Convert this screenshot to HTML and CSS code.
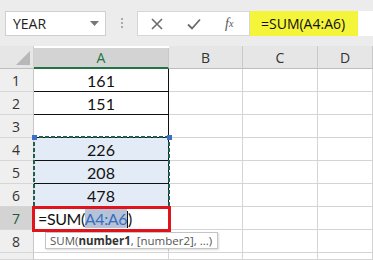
FILE: index.html
```html
<!DOCTYPE html>
<html lang="en">
<head>
  <meta charset="UTF-8" />
  <title>Excel - SUM</title>
  <link rel="stylesheet" href="styles.css">
</head>
<body>
  <div class="toolbar">
    <div class="name-box">
      <span>YEAR</span>
      <svg class="caret" width="9" height="5" viewBox="0 0 9 5"><path d="M0 0 H9 L4.5 5 Z" fill="#777"/></svg>
    </div>
    <div class="grip">
      <span></span><span></span><span></span>
    </div>
    <div class="fx-buttons">
      <svg width="12" height="12" viewBox="0 0 12 12"><path d="M1 1 L11 11 M11 1 L1 11" stroke="#6b6b6b" stroke-width="1.6"/></svg>
      <svg width="14" height="12" viewBox="0 0 14 12"><path d="M1 6.5 L5 10.5 L13 1.5" stroke="#6b6b6b" stroke-width="1.8" fill="none"/></svg>
      <span class="fx">f<sub>x</sub></span>
    </div>
    <div class="formula-bar">
      <span class="formula-text">=SUM(A4:A6)</span>
    </div>
  </div>

  <div class="sheet">
    <div class="corner"><svg width="20" height="20" viewBox="0 0 20 20"><path d="M20 0 V20 H0 Z" fill="#b8b8b8"/></svg></div>
    <div class="col-head active">A</div>
    <div class="col-head">B</div>
    <div class="col-head">C</div>
    <div class="col-head">D</div>

    <div class="row-head">1</div>
    <div class="cell val bordered">161</div>
    <div class="cell"></div><div class="cell"></div><div class="cell"></div>

    <div class="row-head">2</div>
    <div class="cell val bordered">151</div>
    <div class="cell"></div><div class="cell"></div><div class="cell"></div>

    <div class="row-head">3</div>
    <div class="cell val bordered"></div>
    <div class="cell"></div><div class="cell"></div><div class="cell"></div>

    <div class="row-head">4</div>
    <div class="cell val ref">226
      <div class="ref-range"></div>
      <span class="handle left"></span><span class="handle right"></span>
    </div>
    <div class="cell"></div><div class="cell"></div><div class="cell"></div>

    <div class="row-head">5</div>
    <div class="cell val ref">208</div>
    <div class="cell"></div><div class="cell"></div><div class="cell"></div>

    <div class="row-head">6</div>
    <div class="cell val ref">478</div>
    <div class="cell"></div><div class="cell"></div><div class="cell"></div>

    <div class="row-head active">7</div>
    <div class="cell edit">
      <div class="edit-box">=SUM(<span class="sel">A4:A6</span><span class="caret-line"></span>)</div>
      <div class="tooltip">SUM(<b>number1</b>, [number2], ...)</div>
    </div>
    <div class="cell"></div><div class="cell"></div><div class="cell"></div>

    <div class="row-head">8</div>
    <div class="cell"></div>
    <div class="cell"></div><div class="cell"></div><div class="cell"></div>

    <div class="row-head"></div>
    <div class="cell"></div>
    <div class="cell"></div><div class="cell"></div><div class="cell"></div>
  </div>
</body>
</html>
```

FILE: styles.css
```css
html, body {
  margin: 0;
  padding: 0;
}

body {
  width: 373px;
  height: 260px;
  overflow: hidden;
  background: #e9e9e9;
  font-family: 'Open Sans', 'Noto Sans', sans-serif;
  color: #222;
}

.toolbar {
  height: 46px;
  display: flex;
  align-items: center;
  padding-left: 5px;
  box-sizing: border-box;
  background: #ececec;
}

.name-box {
  width: 101px;
  height: 25px;
  box-sizing: border-box;
  background: white;
  border: 1px solid #cfcfcf;
  display: flex;
  align-items: center;
  justify-content: space-between;
  padding: 0 6px 0 7px;
  font-size: 14px;
  margin-top: 1px;
}

.grip {
  width: 31px;
  display: flex;
  flex-direction: column;
  align-items: center;
  gap: 2px;
}

.grip span {
  width: 2px;
  height: 2px;
  background: #aaa;
}

.fx-buttons {
  width: 113px;
  height: 25px;
  box-sizing: border-box;
  background: white;
  border: 1px solid #d6d6d6;
  display: flex;
  align-items: center;
  padding-left: 13px;
  gap: 24px;
  margin-top: 1px;
}

.fx {
  font-family: 'Liberation Serif', serif;
  font-style: italic;
  font-size: 14px;
  color: #555;
}

.fx sub {
  font-size: 10px;
  vertical-align: 1px;
}

.formula-bar {
  flex: 1;
  height: 25px;
  margin-top: 1px;
  background: white;
  display: flex;
}

.formula-text {
  background: #f4f43a;
  width: 108px;
  height: 100%;
  box-sizing: border-box;
  padding-left: 11px;
  display: flex;
  align-items: center;
  font-size: 14px;
  color: #111;
}

.sheet {
  display: grid;
  grid-template-columns: 34px 135px 74px 75px 1fr;
  grid-template-rows: repeat(9, 23px) 7px;
  background: white;
}

.corner {
  background: #e6e6e6;
  border-right: 1px solid #d0d0d0;
  border-bottom: 1px solid #bdbdbd;
  display: flex;
  align-items: flex-end;
  justify-content: flex-end;
  padding: 0 3px 3px 0;
  box-sizing: border-box;
}

.corner svg {
  width: 14px;
  height: 14px;
}

.col-head {
  background: #e6e6e6;
  border-right: 1px solid #c8c8c8;
  border-bottom: 1px solid #bdbdbd;
  display: flex;
  align-items: center;
  justify-content: center;
  font-size: 14px;
  color: #333;
}

.col-head.active {
  background: #d3d3d3;
  color: #217346;
  border-bottom: 2px solid #217346;
  margin-top: 2px;
}

.row-head {
  background: #efefef;
  border-right: 1px solid #c8c8c8;
  border-bottom: 1px solid #d6d6d6;
  font-size: 14px;
  display: flex;
  align-items: center;
  padding-left: 12px;
  color: #333;
  overflow: hidden;
}

.row-head.active {
  background: #d3d3d3;
  color: #1f5a3c;
}

.cell {
  border-right: 1px solid #d4d4d4;
  border-bottom: 1px solid #d4d4d4;
  position: relative;
}

.val {
  font-family: 'Lato', 'Open Sans', sans-serif;
  font-size: 16px;
  display: flex;
  align-items: center;
  justify-content: center;
  color: #111;
}

.bordered {
  border-right: 1px solid #111;
  border-bottom: 1px solid #111;
}

.ref {
  background: #e3ebf7;
  border-right: 1px solid #111;
  border-bottom: 1px solid #111;
}

.ref-range {
  position: absolute;
  left: -1px;
  top: -2px;
  width: 137px;
  height: 72px;
  background:
    repeating-linear-gradient(90deg, #1f5f52 0 4px, transparent 4px 6px) top / 100% 2px no-repeat,
    repeating-linear-gradient(90deg, #1f5f52 0 4px, transparent 4px 6px) bottom / 100% 2px no-repeat,
    repeating-linear-gradient(180deg, #1f5f52 0 4px, transparent 4px 6px) left / 2px 100% no-repeat,
    repeating-linear-gradient(180deg, #1f5f52 0 4px, transparent 4px 6px) right / 2px 100% no-repeat;
  z-index: 1;
}

.handle {
  position: absolute;
  top: -3px;
  width: 5px;
  height: 5px;
  background: #3c6fc8;
  z-index: 2;
}

.handle.left { left: -2px; }
.handle.right { right: -4px; }

.edit-box {
  position: absolute;
  left: -2px;
  top: -1px;
  width: 139px;
  height: 26px;
  box-sizing: border-box;
  border: 3px solid #e0141b;
  background: white;
  font-family: 'Lato', 'Open Sans', sans-serif;
  font-size: 16px;
  letter-spacing: -0.4px;
  line-height: 20px;
  padding-left: 3px;
  color: #111;
  z-index: 3;
}

.sel {
  background: #b4c3d8;
  color: #3b6cbc;
}

.caret-line {
  display: inline-block;
  width: 1px;
  height: 17px;
  background: #111;
  vertical-align: -3px;
}

.tooltip {
  position: absolute;
  left: 11px;
  top: 25px;
  width: 173px;
  height: 17px;
  box-sizing: border-box;
  background: white;
  border: 1px solid #c4c4c4;
  box-shadow: 1px 1px 2px rgba(0, 0, 0, 0.15);
  font-family: 'Open Sans', sans-serif;
  font-size: 11.5px;
  line-height: 15px;
  padding-left: 4px;
  color: #555;
  white-space: nowrap;
  z-index: 4;
}

.tooltip b {
  color: #333;
}
```
